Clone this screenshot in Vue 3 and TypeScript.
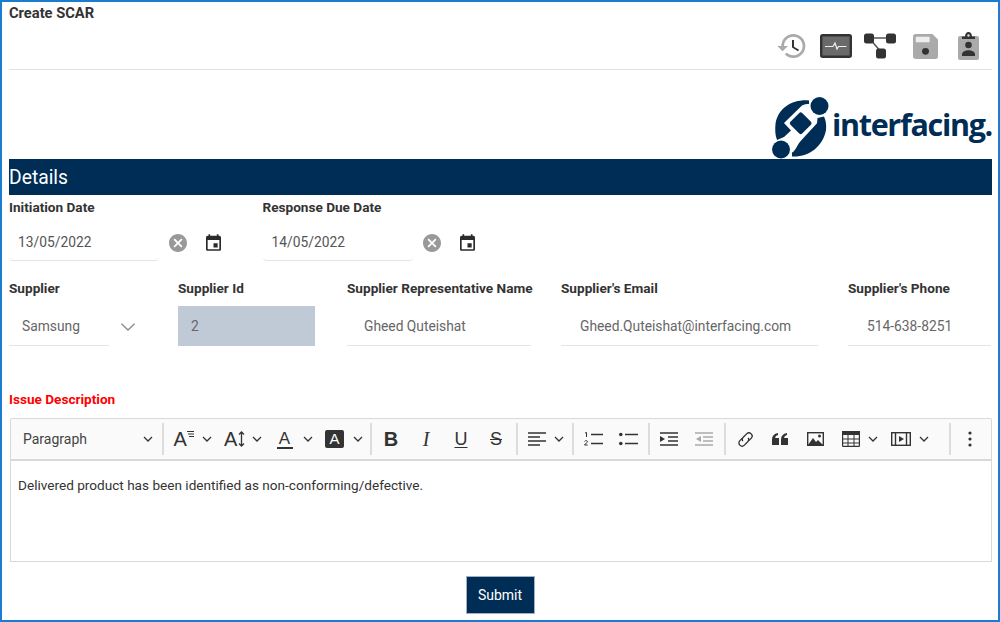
<script setup lang="ts">
const suppliers = [
  { label: 'Supplier', value: 'Samsung', kind: 'select' },
  { label: 'Supplier Id', value: '2', kind: 'locked' },
  { label: 'Supplier Representative Name', value: 'Gheed Quteishat', kind: 'rep' },
  { label: "Supplier's Email", value: 'Gheed.Quteishat@interfacing.com', kind: 'email' },
  { label: "Supplier's Phone", value: '514-638-8251', kind: 'phone' },
]

const dates = [
  { label: 'Initiation Date', value: '13/05/2022' },
  { label: 'Response Due Date', value: '14/05/2022' },
]
</script>

<template>
  <div class="frame">
    <div class="title">Create SCAR</div>

    <!-- top actions -->
    <div class="actions">
      <svg viewBox="0 0 24 24" width="32" height="32">
        <path fill="#aaa" d="M13 3a9 9 0 0 0-9 9H1l3.89 3.89.07.14L9 12H6c0-3.87 3.13-7 7-7s7 3.13 7 7-3.13 7-7 7c-1.93 0-3.68-.79-4.94-2.06l-1.42 1.42A8.954 8.954 0 0 0 13 21a9 9 0 0 0 0-18z" />
        <path fill="#333" d="M12 7.5h1.5v5l3.8 2.3-.8 1.2-4.5-2.8z" />
      </svg>
      <svg viewBox="0 0 32 24" width="32" height="24">
        <rect x="1.2" y="1.2" width="29.6" height="21.6" rx="1.5" fill="#6a6a6a" stroke="#333" stroke-width="2.4" />
        <path fill="none" stroke="#eee" stroke-width="1.2" d="M5 12.500h8l2-3.500 2 6 1.500-2.500h8" />
      </svg>
      <svg viewBox="0 0 32 26" width="32" height="26">
        <path fill="none" stroke="#555" stroke-width="1.500" d="M5 5h22M5 5l13 15" />
        <rect x="0" y="0.500" width="10" height="10" rx="2.500" fill="#333" />
        <rect x="22" y="0.500" width="10" height="10" rx="2.500" fill="#333" />
        <rect x="12" y="15.500" width="10" height="10" rx="2.500" fill="#333" />
      </svg>
      <svg viewBox="3 3 18 18" width="25" height="25">
        <path fill="#aaa" d="M17 3H5a2 2 0 0 0-2 2v14a2 2 0 0 0 2 2h14a2 2 0 0 0 2-2V7l-4-4z" />
        <rect x="5" y="5" width="10" height="4" rx="0.500" fill="#eee" />
        <circle cx="12" cy="15.500" r="2.500" fill="#333" />
      </svg>
      <svg viewBox="0 0 21 28" width="21" height="28">
        <rect x="0" y="4" width="21" height="24" rx="2" fill="#aaa" />
        <path fill="#333" d="M7 4.500C7 2 8.500 0 10.500 0S14 2 14 4.500h3V7H4V4.500z" />
        <circle cx="10.500" cy="3.500" r="1.200" fill="#ddd" />
        <circle cx="10.500" cy="13" r="3.300" fill="#333" />
        <path fill="#333" d="M4 24v-2c0-2.500 4-3.800 6.500-3.800S17 19.500 17 22v2z" />
      </svg>
    </div>
    <div class="rule"></div>

    <div class="logo">
      <svg viewBox="0 0 60 62" width="60" height="62">
        <g fill="#002d56">
          <circle cx="47.500" cy="9" r="9" />
          <circle cx="9" cy="52.500" r="9" />
          <rect x="20.400" y="18" width="16.500" height="16.500" rx="2" transform="rotate(45 28.700 26.300)" />
          <path d="M37 3.500C22 2 6 10 3.500 27 3 32 3 38 5 43l7-3 7-6.500L12 26 30 8.500C32 7 35 7 37 7z" />
          <path d="M20 59.500C36 60.500 51 50 54 33c.5-5 0-9-2-13.500L45.500 21l-.5 5.300L28.700 44C26 46.500 23 55 20 55.500z" />
        </g>
      </svg>
      <span class="logo-text">interfacing.</span>
    </div>

    <div class="banner">Details</div>

    <div class="date-row">
      <div v-for="d in dates" :key="d.label" class="date-field">
        <label class="lbl">{{ d.label }}</label>
        <div class="date-line">
          <div class="date-input">{{ d.value }}</div>
          <svg class="clear" viewBox="2 2 20 20" width="18" height="18">
            <path fill="#999" d="M12 2C6.470 2 2 6.470 2 12s4.470 10 10 10 10-4.470 10-10S17.530 2 12 2zm5 13.590L15.590 17 12 13.410 8.410 17 7 15.590 10.590 12 7 8.410 8.410 7 12 10.590 15.590 7 17 8.410 13.410 12 17 15.590z" />
          </svg>
          <svg class="cal" viewBox="3 1 18 20" width="15" height="17">
            <path fill="#2b2b2b" d="M17 12h-5v5h5v-5zM16 1v2H8V1H6v2H5c-1.110 0-1.990.9-1.990 2L3 19c0 1.100.89 2 2 2h14c1.100 0 2-.9 2-2V5c0-1.100-.9-2-2-2h-1V1h-2zm3 18H5V8h14v11z" />
          </svg>
        </div>
      </div>
    </div>

    <div class="supplier-row">
      <div v-for="s in suppliers" :key="s.label" class="field">
        <label class="lbl">{{ s.label }}</label>
        <div class="box" :class="s.kind">
          <span>{{ s.value }}</span>
          <svg v-if="s.kind === 'select'" class="chev" viewBox="0 0 14 8" width="14" height="8">
            <path fill="none" stroke="#888" stroke-width="1.300" d="M.5.8 7 7l6.500-6.200" />
          </svg>
        </div>
      </div>
    </div>

    <div class="issue">Issue Description</div>

    <div class="editor">
      <div class="toolbar">
        <div class="tb para">
          <span>Paragraph</span>
          <svg class="tchev" viewBox="0 0 10 6" width="10" height="6"><path d="M1 1l4 4 4-4" /></svg>
        </div>
        <i class="sep"></i>

        <div class="tb drop">
          <span class="glyph big">A<svg viewBox="0 0 7 8" width="7" height="8" class="lines"><path stroke="#333" d="M0 .5h7M1 3h6M2 5.500h5" /></svg></span>
          <svg class="tchev" viewBox="0 0 10 6" width="10" height="6"><path d="M1 1l4 4 4-4" /></svg>
        </div>
        <div class="tb drop">
          <span class="glyph big">A<svg viewBox="0 0 7 16" width="7" height="16" class="arrow"><path fill="none" stroke="#333" stroke-width="1.300" d="M3.500 1v14M1 3.500 3.500 1 6 3.500M1 12.500 3.500 15 6 12.500" /></svg></span>
          <svg class="tchev" viewBox="0 0 10 6" width="10" height="6"><path d="M1 1l4 4 4-4" /></svg>
        </div>
        <div class="tb drop">
          <span class="glyph under">A</span>
          <svg class="tchev" viewBox="0 0 10 6" width="10" height="6"><path d="M1 1l4 4 4-4" /></svg>
        </div>
        <div class="tb drop">
          <span class="glyph boxed">A</span>
          <svg class="tchev" viewBox="0 0 10 6" width="10" height="6"><path d="M1 1l4 4 4-4" /></svg>
        </div>
        <i class="sep"></i>

        <div class="tb"><span class="glyph bold">B</span></div>
        <div class="tb"><span class="glyph ital">I</span></div>
        <div class="tb"><span class="glyph uline">U</span></div>
        <div class="tb"><span class="glyph strike">S</span></div>
        <i class="sep"></i>

        <div class="tb drop-s">
          <svg viewBox="0 0 18 14" width="18" height="14"><path stroke="#333" stroke-width="1.500" d="M0 1h18M0 5h12M0 9h18M0 13h12" /></svg>
          <svg class="tchev" viewBox="0 0 10 6" width="10" height="6"><path d="M1 1l4 4 4-4" /></svg>
        </div>
        <i class="sep"></i>

        <div class="tb">
          <svg viewBox="0 0 19 14" width="19" height="14"><path stroke="#333" stroke-width="1.500" d="M7 2.500h12M7 11.500h12" /><path fill="none" stroke="#333" d="M1 1l1.500-.5V5M.5 9.500c1-1.500 3-1 3 .2 0 1-2.500 2-3 3.300h3.200" /></svg>
        </div>
        <div class="tb">
          <svg viewBox="0 0 19 14" width="19" height="14"><path stroke="#333" stroke-width="1.500" d="M6 2.500h13M6 11.500h13" /><circle cx="1.800" cy="2.500" r="1.800" fill="#333" /><circle cx="1.800" cy="11.500" r="1.800" fill="#333" /></svg>
        </div>
        <i class="sep"></i>

        <div class="tb">
          <svg viewBox="0 0 18 14" width="18" height="14"><path stroke="#333" stroke-width="1.400" d="M0 1h18M8 5h10M8 9h10M0 13h18" /><path fill="#333" d="M0 4l5 3-5 3z" /></svg>
        </div>
        <div class="tb">
          <svg viewBox="0 0 18 14" width="18" height="14"><path stroke="#aaa" stroke-width="1.400" d="M0 1h18M8 5h10M8 9h10M0 13h18" /><path fill="#aaa" d="M6 4 1 7l5 3z" /></svg>
        </div>
        <i class="sep"></i>

        <div class="tb">
          <svg viewBox="0 0 16 16" width="17" height="17"><g transform="rotate(-45 8 8)" fill="none" stroke="#333" stroke-width="1.300"><path d="M6.500 5h-3a3 3 0 0 0 0 6H8a3 3 0 0 0 2.900-2.300" /><path d="M9.500 11h3a3 3 0 0 0 0-6H8a3 3 0 0 0-2.900 2.300" /></g></svg>
        </div>
        <div class="tb">
          <svg viewBox="0 0 16 12" width="16" height="12"><path fill="#333" d="M0 12V6.500C0 3 2 .8 6 0v2C4 2.700 3.300 3.500 3.200 5H7v7zM9 12V6.500C9 3 11 .8 15 0v2c-2 .7-2.700 1.500-2.800 3H16v7z" /></svg>
        </div>
        <div class="tb">
          <svg viewBox="0 0 17 14" width="17" height="14"><rect x=".7" y=".7" width="15.600" height="12.600" fill="none" stroke="#333" stroke-width="1.400" /><path fill="#333" d="M1 13 6 6l3 4 2-2 5 5z" /><circle cx="12.500" cy="4" r="1.500" fill="#333" /></svg>
        </div>
        <div class="tb drop-t">
          <svg viewBox="0 0 18 16" width="18" height="16"><rect x=".6" y=".6" width="16.800" height="14.800" rx=".6" fill="none" stroke="#333" stroke-width="1.200" /><path fill="#333" d="M0 0h18v4H0z" /><path stroke="#333" d="M6 4v11M12 4v11M1 8h16M1 12h16" /></svg>
          <svg class="tchev" viewBox="0 0 10 6" width="10" height="6"><path d="M1 1l4 4 4-4" /></svg>
        </div>
        <div class="tb drop-t">
          <svg viewBox="0 0 20 14" width="20" height="14"><rect x=".7" y=".7" width="18.600" height="12.600" fill="none" stroke="#333" stroke-width="1.400" /><path stroke="#333" stroke-width="1.400" d="M4.500 1v12M15.500 1v12" /><path fill="#333" d="M8 4l5 3-5 3z" /></svg>
          <svg class="tchev" viewBox="0 0 10 6" width="10" height="6"><path d="M1 1l4 4 4-4" /></svg>
        </div>
        <div class="spacer"></div>
        <i class="sep"></i>
        <div class="tb dots">
          <svg viewBox="0 0 4 16" width="4" height="16"><circle cx="2" cy="2" r="1.600" fill="#333" /><circle cx="2" cy="8" r="1.600" fill="#333" /><circle cx="2" cy="14" r="1.600" fill="#333" /></svg>
        </div>
      </div>
      <div class="content">Delivered product has been identified as non-conforming/defective.</div>
    </div>

    <div class="submit-wrap">
      <button class="submit" type="button">Submit</button>
    </div>
  </div>
</template>

<style>
html, body { margin: 0; background: #fff; }
</style>

<style scoped>
.frame {
  box-sizing: border-box;
  width: 1000px;
  height: 622px;
  overflow: hidden;
  border: 2px solid #1a7dcf;
  padding: 0 6px 0 7px;
  background: #fff;
  font-family: Roboto, "Liberation Sans", sans-serif;
  color: #333;
}
.title {
  margin-top: 3px;
  font-size: 14.7px;
  line-height: 16px;
  font-weight: 700;
}
.actions {
  display: flex;
  justify-content: flex-end;
  align-items: center;
  height: 28px;
  margin-top: 11px;
  padding-right: 13px;
  gap: 12px;
}
.actions svg:nth-child(4) { margin-left: 5px; margin-right: 8px; }
.rule {
  height: 1px;
  margin-top: 9px;
  margin-bottom: 27px;
  background: #e2e2e2;
}
.logo {
  display: flex;
  justify-content: flex-end;
  align-items: center;
  height: 62px;
}
.logo-text {
  font-family: "Open Sans", sans-serif;
  font-weight: 700;
  font-size: 30.5px;
  letter-spacing: -1.3px;
  color: #002d56;
  line-height: 1;
  margin-bottom: 8px;
}
.banner {
  height: 36px;
  line-height: 38px;
  background: #002d56;
  color: #fff;
  font-size: 19.3px;
}
.lbl {
  display: block;
  font-size: 13.6px;
  font-weight: 700;
  line-height: 16px;
  color: #333;
}
.date-row {
  display: flex;
  margin-top: 4px;
}
.date-field { width: 253.500px; }
.date-line {
  display: flex;
  align-items: center;
  margin-top: 10px;
}
.date-input {
  box-sizing: border-box;
  width: 150px;
  height: 36px;
  line-height: 34px;
  padding-left: 9px;
  font-size: 13.800px;
  color: #555;
  border-bottom: 1px solid #e4e4e4;
  border-radius: 0 0 4px 4px;
}
.clear { margin-left: 10px; }
.cal { margin-left: 19px; margin-bottom: 2px; }
.supplier-row {
  display: grid;
  grid-template-columns: 169px 169px 214px 287px 1fr;
  margin-top: 19px;
}
.box {
  box-sizing: border-box;
  position: relative;
  height: 40px;
  margin-top: 10px;
  line-height: 40px;
  font-size: 13.800px;
  color: #666;
  border-bottom: 1px solid #e4e4e4;
}
.box.select { width: 100px; padding-left: 13px; }
.box.locked { width: 137px; padding-left: 13px; background: #bfcad6; border-color: #bfcad6; }
.box.rep { width: 184px; padding-left: 17px; }
.box.email { width: 257px; padding-left: 19px; }
.box.phone { width: 143px; padding-left: 19px; }
.chev { position: absolute; left: 112px; top: 17px; }
.issue {
  margin-top: 45px;
  font-size: 13.6px;
  font-weight: 700;
  line-height: 16px;
  color: #f00;
}
.editor { margin: 11px 0 0 1px; }
.toolbar {
  box-sizing: border-box;
  display: flex;
  align-items: center;
  height: 43px;
  padding-right: 5px;
  background: #fafafa;
  border: 1px solid #d9d9d9;
  border-bottom-width: 2px;
  border-radius: 2px 2px 0 0;
}
.tb {
  flex: none;
  display: flex;
  align-items: center;
  justify-content: center;
  width: 35px;
  height: 32px;
  color: #333;
  font-family: "Liberation Sans", sans-serif;
}
.para {
  box-sizing: border-box;
  width: 148.500px;
  justify-content: space-between;
  padding: 0 7px 0 12px;
  font-size: 14px;
  font-family: Roboto, sans-serif;
  color: #444;
}
.drop { box-sizing: border-box; width: 50.500px; justify-content: flex-start; padding-left: 8px; gap: 8px; }
.drop-s { box-sizing: border-box; width: 50px; justify-content: flex-start; padding-left: 8px; gap: 8px; }
.drop-t { box-sizing: border-box; width: 49.500px; justify-content: flex-start; padding-left: 9px; gap: 8px; }
.dots { width: 32.600px; }
.tchev { fill: none; stroke: #333; stroke-width: 1.300; }
.sep {
  flex: none;
  width: 2px;
  height: 32px;
  margin: 0 2px;
  background: #dcdcdc;
}
.spacer { flex: 1; }
.glyph {
  position: relative;
  display: inline-block;
  width: 20px;
  text-align: center;
  line-height: 20px;
  font-size: 17px;
}
.big { font-size: 20px; text-align: left; }
.lines { position: absolute; left: 13px; top: 2px; }
.arrow { position: absolute; left: 14px; top: 2px; }
.under { border-bottom: 2px solid #333; line-height: 17px; width: 16px; margin: 0 2px; }
.boxed { background: #333; color: #fff; border-radius: 2px; width: 19px; height: 18px; line-height: 18px; font-size: 15px; margin-right: 1px; }
.bold { font-weight: 700; font-size: 20px; }
.ital { font-style: italic; font-family: "Liberation Serif", serif; font-size: 20px; }
.uline { text-decoration: underline; text-underline-offset: 2px; font-size: 18px; }
.strike { text-decoration: line-through; font-size: 18px; }
.content {
  box-sizing: border-box;
  height: 101px;
  padding: 15px 7px;
  font-size: 13.600px;
  line-height: 18px;
  color: #333;
  border: 1px solid #d9d9d9;
  border-top: 0;
}
.submit-wrap {
  display: flex;
  justify-content: center;
  margin-top: 14px;
  padding-right: 1px;
}
.submit {
  width: 69px;
  height: 38px;
  background: #002d56;
  color: #fff;
  border: 1px solid #9fb1c3;
  font-family: Roboto, sans-serif;
  font-size: 14px;
}
</style>
